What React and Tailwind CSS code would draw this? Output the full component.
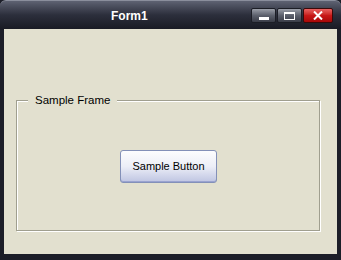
import React from 'react';

const font = { fontFamily: '"Liberation Sans", Arial, sans-serif' };

const TitleButton = ({ kind }) => {
  const red = kind === 'close';
  return (
    <div
      className={`flex items-center justify-center h-[15px] rounded-[2px] border ${
        red
          ? 'w-[30px] border-[#3a0a0a] bg-gradient-to-b from-[#e86060] via-[#c81818] to-[#a80808]'
          : 'w-[25px] border-[#1c1e26] bg-gradient-to-b from-[#9a9ea8] via-[#5c606c] to-[#3a3d48]'
      }`}
    >
      {kind === 'min' && <div className="w-[10px] h-[3px] bg-white mt-[6px]" />}
      {kind === 'max' && <div className="w-[11px] h-[8px] border border-white border-t-[2px]" />}
      {kind === 'close' && (
        <svg width="10" height="9" viewBox="0 0 10 9">
          <path d="M1 0.5 L9 8.5 M9 0.5 L1 8.5" stroke="white" strokeWidth="2" />
        </svg>
      )}
    </div>
  );
};

export default function App() {
  return (
    <div className="w-[341px] h-[260px] bg-[#1c1e28] flex flex-col" style={font}>
      {/* title bar */}
      <div className="h-[29px] flex items-center rounded-t-[6px] border-t border-[#8a8e9c] bg-gradient-to-b from-[#5e6272] via-[#2c2f3c] to-[#191b24]">
        <div className="pl-[111px] text-white font-bold text-[12px] leading-none pt-[1px]">Form1</div>
        <div className="ml-auto mr-[8px] flex gap-[1px] mt-[1px]">
          <TitleButton kind="min" />
          <TitleButton kind="max" />
          <TitleButton kind="close" />
        </div>
      </div>

      {/* client area */}
      <div className="mx-[4px] h-[225px] bg-[#e2e0cf] pt-[71px] pl-[12px] pr-[17px]">
        <div className="relative h-[131px] border border-[#a09f8f] shadow-[inset_1px_1px_0_#ffffff,1px_1px_0_#ffffff] flex items-center justify-center">
          <span className="absolute -top-[8px] left-[11px] bg-[#e2e0cf] px-[7px] text-[11.5px] leading-[14px] text-black">
            Sample Frame
          </span>
          <button className="w-[97px] h-[33px] mt-[1px] ml-[1px] rounded-[3px] border border-[#8390b8] bg-gradient-to-b from-[#fdfdfe] via-[#eceef7] to-[#bfc5e2] text-[11px] text-black shadow-[inset_0_-1px_0_#9aa3d0]">
            Sample Button
          </button>
        </div>
      </div>
    </div>
  );
}
